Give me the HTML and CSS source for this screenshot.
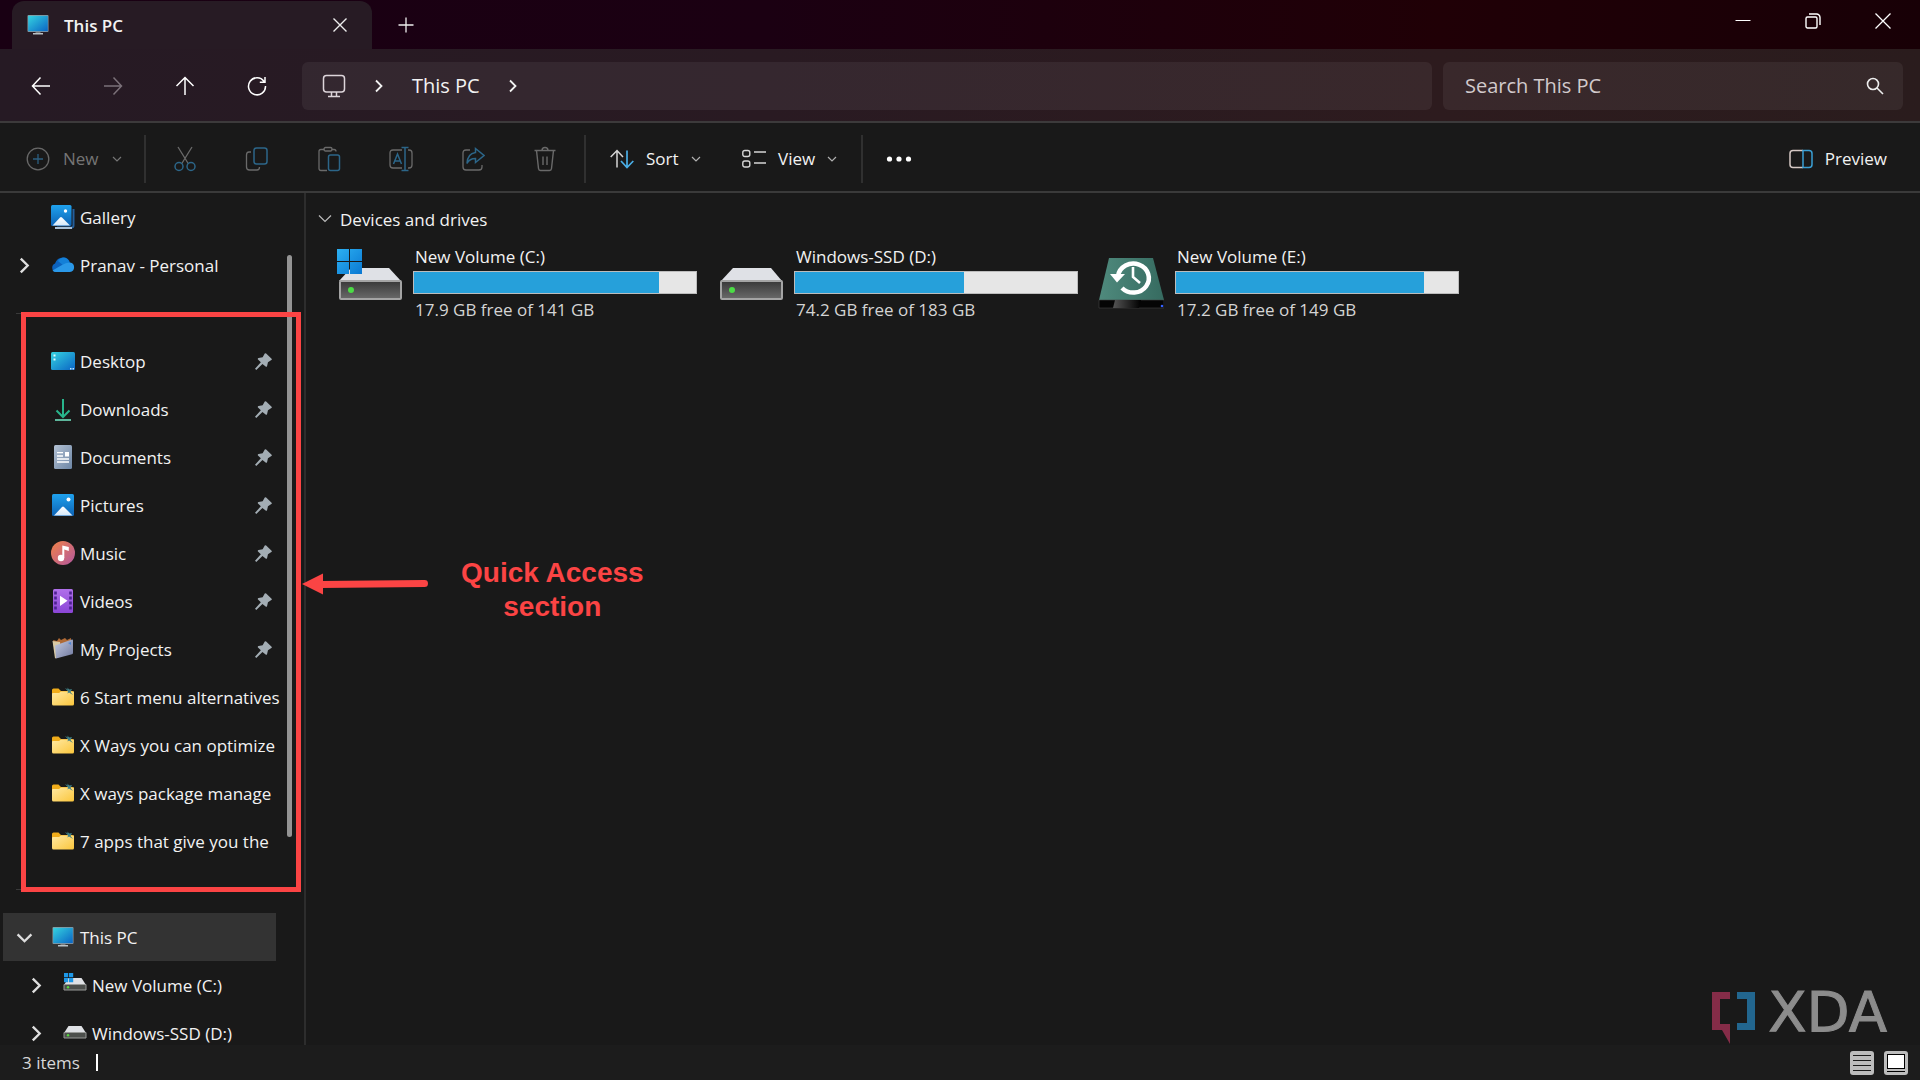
FILE: index.html
```html
<!DOCTYPE html>
<html lang="en">
<head>
<meta charset="utf-8">
<meta name="viewport" content="width=device-width, initial-scale=1">
<title>This PC</title>
<link rel="stylesheet" href="styles.css">
</head>
<body>
<svg class="sprite" aria-hidden="true">
  <defs>
    <linearGradient id="g-screen" x1="0" y1="0" x2="1" y2="1"><stop offset="0" stop-color="#35d3e0"/><stop offset="1" stop-color="#0a64c4"/></linearGradient>
    <linearGradient id="g-blue" x1="0" y1="0" x2="0" y2="1"><stop offset="0" stop-color="#1fa2ee"/><stop offset="1" stop-color="#0d62b4"/></linearGradient>
    <linearGradient id="g-white" x1="0" y1="0" x2="0" y2="1"><stop offset="0" stop-color="#ffffff"/><stop offset="1" stop-color="#d4e8fa"/></linearGradient>
    <linearGradient id="g-doc" x1="0" y1="0" x2="1" y2="1"><stop offset="0" stop-color="#b4c2d4"/><stop offset="1" stop-color="#6d86a5"/></linearGradient>
    <linearGradient id="g-music" x1="0" y1="0" x2="1" y2="1"><stop offset="0" stop-color="#f08247"/><stop offset="1" stop-color="#b3579f"/></linearGradient>
    <linearGradient id="g-video" x1="0" y1="0" x2="0" y2="1"><stop offset="0" stop-color="#b070ea"/><stop offset="1" stop-color="#8a45d6"/></linearGradient>
    <linearGradient id="g-folder" x1="0" y1="0" x2="1" y2="1"><stop offset="0" stop-color="#ffe9a2"/><stop offset="1" stop-color="#fbc63c"/></linearGradient>
    <linearGradient id="g-proj" x1="0" y1="0" x2="1" y2="1"><stop offset="0" stop-color="#c4cbe0"/><stop offset="1" stop-color="#7079a0"/></linearGradient>
    <linearGradient id="g-front" x1="0" y1="0" x2="0" y2="1"><stop offset="0" stop-color="#383838"/><stop offset="1" stop-color="#6a6a6a"/></linearGradient>
    <linearGradient id="g-black" x1="0" y1="0" x2="1" y2="0"><stop offset="0" stop-color="#555"/><stop offset="1" stop-color="#000"/></linearGradient>
    <linearGradient id="g-win" x1="0" y1="0" x2="1" y2="1"><stop offset="0" stop-color="#2cb0f2"/><stop offset="1" stop-color="#0a78d2"/></linearGradient>
    <linearGradient id="g-green" x1="0" y1="0" x2="1" y2="0"><stop offset="0" stop-color="#4f8a7d"/><stop offset="1" stop-color="#366b60"/></linearGradient>
  </defs>
  <symbol id="i-pc" viewBox="0 0 24 24"><rect x="1.5" y="2" width="21" height="17" rx="1" fill="#8d989e"/><rect x="2.2" y="2.800" width="19.6" height="15.4" fill="url(#g-screen)"/><path d="M9.5 19h5v1.500h-5z" fill="#777"/><path d="M7 20h10v1.500H7z" fill="#b9c1c5"/></symbol>
  <symbol id="i-gallery" viewBox="0 0 24 24"><path d="M6 22.500h14.500a2 2 0 0 0 2-2V4" fill="none" stroke="#235f9c" stroke-width="2"/><path d="M4 23h17" stroke="#a9c0d6" stroke-width="2"/><rect width="20.500" height="21" rx="1.500" fill="url(#g-blue)"/><path d="M1.500 20.500 9 12.500q1-1 2 0l8 8z" fill="url(#g-white)"/><circle cx="14.500" cy="6" r="1.700" fill="#fff"/></symbol>
  <symbol id="i-cloud" viewBox="0 0 24 24"><path d="M4.500 19A4.500 4.500 0 0 1 4 10.500Q6 4.500 12 4.500T19 10l0 2z" fill="#0c62bd"/><path d="M7 8Q9 4.500 13 4.500 17 5 18.500 9.300L13 13z" fill="#1480d8"/><path d="M1.500 17.500 11 12q4-2.700 8-2.500a4.800 4.800 0 0 1 0 9.500H5q-2.200 0-3.500-1.500z" fill="#2a98e8"/></symbol>
  <symbol id="i-desktop" viewBox="0 0 24 24"><rect y="3" width="24" height="18" rx="1.500" fill="url(#g-screen)"/><path d="M2.500 5.500h2v2h-2zM2.500 9.500h2v2h-2z" fill="#dffcff"/><path d="M19 19h1.500v1.500H19zM21.500 19H23v1.500h-1.500z" fill="#bfe3ff"/></symbol>
  <symbol id="i-download" viewBox="0 0 24 24"><path d="M12 2v18M5.500 13.500 12 20l6.500-6.500" fill="none" stroke="#28b58c" stroke-width="2"/><path d="M4 23h16" stroke="#5db59b" stroke-width="2"/></symbol>
  <symbol id="i-doc" viewBox="0 0 24 24"><rect x="3" width="18" height="24" rx="1.500" fill="url(#g-doc)"/><path d="M6 7.700h6M6 11h6M6 14h12M6 17h12" stroke="#fff" stroke-width="1.300"/><path d="M14 7h4v4.500h-4z" fill="#fff"/></symbol>
  <symbol id="i-pic" viewBox="0 0 24 24"><rect x="1" y="1" width="22" height="22" rx="1.500" fill="url(#g-blue)"/><path d="M3 22.500 11 14q1-1 2 0l8.500 8.500z" fill="url(#g-white)"/><circle cx="17.500" cy="6.500" r="2" fill="#fff"/></symbol>
  <symbol id="i-music" viewBox="0 0 24 24"><circle cx="12" cy="12" r="12" fill="url(#g-music)"/><circle cx="10" cy="17" r="3.200" fill="#fff"/><path d="M11.300 17V4.500l6.500 1.500v4l-4.500-1.500V17z" fill="#fff"/></symbol>
  <symbol id="i-video" viewBox="0 0 24 24"><rect x="2" width="20" height="24" rx="1.500" fill="url(#g-video)"/><path d="M3.200 2.500h2.600v3H3.200zm0 5h2.600v3H3.200zm0 5h2.600v3H3.200zm0 5h2.600v3H3.200zM18.200 2.500h2.600v3h-2.600zm0 5h2.600v3h-2.600zm0 5h2.600v3h-2.600zm0 5h2.600v3h-2.600z" fill="#4d2191"/><path d="m9 6.800 7.500 5L9 17z" fill="#fff"/></symbol>
  <symbol id="i-projects" viewBox="0 0 24 24"><path d="M2 3l4 1 2-3 2 2 4-2 2 2 4-2v4L4 9z" fill="#b06a35"/><path d="M1.500 4 9 5l1 14-6 2.500z" fill="#d8c9a4"/><path d="M4 8.500 21 2.500q1-.2 1 1V16q0 1-1 1.300L5 21.500z" fill="url(#g-proj)"/><path d="m17 6 3-1v3z" fill="#4d86d8"/></symbol>
  <symbol id="i-folder" viewBox="0 0 24 24"><path d="M1 5q0-1.500 1.500-1.500h5L10 6h11q2 0 2 2v3H1z" fill="#f0ac1a"/><path d="M1 9q0-1 1-1h6l2-1.500h13V19q0 1.500-1.500 1.500h-19Q1 20.500 1 19z" fill="url(#g-folder)"/><path d="m14 3 3 1.500L16 2.500l2.500 2L21 4l-1.500 3 2.500 3-4-2.500-1.500 1 .5-2z" fill="#3f7f86"/></symbol>
  <symbol id="i-disk" viewBox="0 0 24 24"><path d="M5.500 5h13L23 12H1z" fill="#dfe1e5"/><path d="M1 11.500h22V17H1z" fill="#4c4f4c" stroke="#989a98"/><circle cx="5" cy="14.200" r="1.200" fill="#55d840"/></symbol>
  <symbol id="i-diskwin" viewBox="0 0 24 24"><path d="M5.500 5h13L23 12H1z" fill="#dfe1e5"/><path d="M1 11.500h22V17H1z" fill="#4c4f4c" stroke="#989a98"/><circle cx="5" cy="14.200" r="1.200" fill="#55d840"/><path d="M1 0h4.200v4.200H1zM6 0h4.200v4.200H6zM1 5h4.200v4.200H1zM6 5h4.200v4.200H6z" fill="#1d98e8"/></symbol>
  <symbol id="i-pin" viewBox="0 0 16 16"><path d="M9.200.5q.7-.6 1.300 0l5.100 5q.6.700-.2 1.200L12.200 8.800l-.8 3.400q-.4 1.300-1.400.6L7 10.300 1.200 16 0 14.800l5.500-6L2.800 6.200q-.6-1 .6-1.400L7.200 4z" fill="#a3adb4"/></symbol>
  <symbol id="i-right" viewBox="0 0 16 16"><path d="m4.500 1.500 6.500 6.500-6.500 6.500" fill="none" stroke="currentColor" stroke-width="2.200"/></symbol>
  <symbol id="i-down" viewBox="0 0 16 16"><path d="M1.500 5 8 11.500 14.500 5" fill="none" stroke="currentColor" stroke-width="2.200"/></symbol>
  <symbol id="i-caret" viewBox="0 0 10 10"><path d="m1 3 4 4 4-4" fill="none" stroke="currentColor" stroke-width="1.200"/></symbol>
  <symbol id="i-crumb" viewBox="0 0 12 14"><path d="m3 1.500 5.500 5.500L3 12.500" fill="none" stroke="currentColor" stroke-width="1.800"/></symbol>
</svg>

<div class="window">
  <header class="titlebar">
    <div class="tab">
      <svg class="icon24"><use href="#i-pc"/></svg>
      <span class="tab-title">This PC</span>
      <button class="tab-close" aria-label="Close tab"><svg width="14" height="16" viewBox="0 0 14 16"><path d="m.5 1.500 13 13M13.500 1.500l-13 13" stroke="#eee" stroke-width="1.400"/></svg></button>
    </div>
    <button class="tab-new" aria-label="New tab"><svg width="16" height="16" viewBox="0 0 16 16"><path d="M8 .5v15M.5 8h15" stroke="#eee" stroke-width="1.300"/></svg></button>
    <div class="win-controls">
      <button aria-label="Minimize"><svg width="16" height="16" viewBox="0 0 16 16"><path d="M.5 7.500h15" stroke="#fff"/></svg></button>
      <button aria-label="Restore"><svg width="16" height="16" viewBox="0 0 16 16" fill="none" stroke="#fff" stroke-width="1.400"><rect x="1" y="4" width="11" height="11" rx="1.500"/><path d="M4 1h7.500A3.500 3.500 0 0 1 15 4.500V12"/></svg></button>
      <button aria-label="Close"><svg width="16" height="16" viewBox="0 0 16 16"><path d="m.5.5 15 15M15.500.5l-15 15" stroke="#fff" stroke-width="1.300"/></svg></button>
    </div>
  </header>

  <div class="navbar">
    <div class="nav-buttons">
      <button aria-label="Back"><svg width="20" height="20" viewBox="0 0 20 20"><path d="M19 10H1.500M9.500 1.500 1.500 10l8 8.500" /></svg></button>
      <button aria-label="Forward" disabled><svg width="20" height="20" viewBox="0 0 20 20"><path d="M1 10h17.500M10.500 1.500l8 8.500-8 8.500"/></svg></button>
      <button aria-label="Up"><svg width="20" height="20" viewBox="0 0 20 20"><path d="M10 19V1.500M1.500 10 10 1.500l8.500 8.500"/></svg></button>
      <button aria-label="Refresh"><svg width="20" height="20" viewBox="0 0 20 20"><path d="M17 5.500A8.500 8.500 0 1 0 18.500 10M18 1v5.200h-5.200"/></svg></button>
    </div>
    <div class="address">
      <svg width="24" height="24" viewBox="0 0 24 24" fill="none" stroke="#ddd5da" stroke-width="1.500"><rect x="1.500" y="1.500" width="21" height="16.500" rx="3"/><path d="M9.500 18v4M14.500 18v4M6 22.500h12"/></svg>
      <svg width="12" height="14"><use href="#i-crumb"/></svg>
      <a href="#">This PC</a>
      <svg width="12" height="14"><use href="#i-crumb"/></svg>
    </div>
    <div class="search">
      <input type="search" aria-label="Search This PC" placeholder="Search This PC">
      <svg width="18" height="18" viewBox="0 0 18 18" fill="none" stroke="#eee" stroke-width="1.600"><circle cx="7" cy="7" r="5.500"/><path d="m11 11 6 6"/></svg>
    </div>
  </div>

  <div class="toolbar">
    <button class="new" disabled>
      <svg width="24" height="24" viewBox="0 0 24 24" fill="none" stroke="#686868" stroke-width="1.300"><circle cx="12" cy="12" r="10.800"/><path d="M12 7v10M7 12h10" stroke="#2c5f80"/></svg>
      <span>New</span><svg class="caret"><use href="#i-caret"/></svg>
    </button>
    <span class="sep"></span>
    <button class="tool" aria-label="Cut" disabled><svg width="24" height="26" viewBox="0 0 24 26" fill="none" stroke="#6a6a6a" stroke-width="1.300"><path d="M5 1l10.500 17M19 1 8.500 18"/><g stroke="#2c6689" stroke-width="1.500"><circle cx="6" cy="20.500" r="4"/><circle cx="18" cy="20.500" r="4"/></g></svg></button>
    <button class="tool" aria-label="Copy" disabled><svg width="24" height="26" viewBox="0 0 24 26" fill="none" stroke="#6a6a6a" stroke-width="1.300"><path d="M6 6H4Q1.500 6 1.500 9v12q0 3 3 3H12q2.500 0 2.500-3"/><rect x="9" y="2" width="13" height="16" rx="2.500" stroke="#2c6689" stroke-width="1.500"/></svg></button>
    <button class="tool" aria-label="Paste" disabled><svg width="24" height="26" viewBox="0 0 24 26" fill="none" stroke="#6a6a6a" stroke-width="1.300"><path d="M10 24.500H4q-2 0-2-2v-17q0-2 2-2h3.500M14.500 3.500H17q2 0 2 2"/><rect x="7" y="1.500" width="8" height="3.500" rx="1.500"/><rect x="11.500" y="9" width="11" height="15.500" rx="2" stroke="#2c6689" stroke-width="1.500"/></svg></button>
    <button class="tool" aria-label="Rename" disabled><svg width="26" height="26" viewBox="0 0 26 26" fill="none" stroke="#6a6a6a" stroke-width="1.300"><path d="M14 4H5Q2 4 2 7v12q0 3 3 3h9M20 4h1q3 0 3 3v12q0 3-3 3h-1"/><path d="M17 1.500v23M13.500 1.500h7M13.500 24.500h7M5.500 18l4-10 4 10M7 15h5" stroke="#2c6689" stroke-width="1.500"/></svg></button>
    <button class="tool" aria-label="Share" disabled><svg width="24" height="26" viewBox="0 0 24 26" fill="none" stroke="#6a6a6a" stroke-width="1.300"><path d="M9 4H5Q2 4 2 7v14q0 3 3 3h13q3 0 3-3v-2"/><path d="M14.500 2.500 23 9.500l-8.500 7v-4q-6 0-8.500 5 .5-10 8.500-11z" stroke="#2c6689" stroke-width="1.500"/></svg></button>
    <button class="tool" aria-label="Delete" disabled><svg width="24" height="26" viewBox="0 0 24 26" fill="none" stroke="#6a6a6a" stroke-width="1.400"><path d="M1.500 4.500h21M9 4.500q0-3 3-3t3 3M3.500 4.500l2 18q.2 2 2 2h9q1.800 0 2-2l2-18M10 10.500v8.500M14 10.500v8.500"/></svg></button>
    <span class="sep"></span>
    <button class="menu"><svg width="24" height="20" viewBox="0 0 24 20" fill="none" stroke="#d5d5d5" stroke-width="1.500"><path d="M7 18.500V1.500M.7 8 7 1.500 13 8"/><path d="M17 1.500v17M11 12l6 6.500 6.300-6.500" stroke="#4aaee6" stroke-width="1.700"/></svg><span>Sort</span><svg class="caret"><use href="#i-caret"/></svg></button>
    <button class="menu view"><svg width="24" height="20" viewBox="0 0 24 20" fill="none" stroke="#d5d5d5" stroke-width="1.400"><rect x=".8" y="1.500" width="7" height="6" rx="2"/><rect x=".8" y="12" width="7" height="6" rx="2"/><path d="M12 3h12M12 14h12"/></svg><span>View</span><svg class="caret"><use href="#i-caret"/></svg></button>
    <span class="sep"></span>
    <button class="more" aria-label="See more"><svg width="26" height="6" viewBox="0 0 26 6" fill="#fff"><circle cx="3.500" cy="3" r="2.600"/><circle cx="13" cy="3" r="2.600"/><circle cx="22.500" cy="3" r="2.600"/></svg></button>
    <button class="preview"><svg width="24" height="20" viewBox="0 0 24 20" fill="none" stroke-width="1.500"><path d="M14 1.500H4Q1 1.500 1 4.500v11q0 3 3 3h10" stroke="#d5c8c4"/><path d="M14 1.500h6q3 0 3 3v11q0 3-3 3h-6z" stroke="#3a9fd4"/></svg><span>Preview</span></button>
  </div>

  <div class="body">
    <nav class="sidebar" aria-label="Folders">
      <a class="row" href="#"><span class="chev"></span><svg class="icon24"><use href="#i-gallery"/></svg><span class="label">Gallery</span></a>
      <a class="row" href="#"><span class="chev"><svg class="icon16"><use href="#i-right"/></svg></span><svg class="icon24"><use href="#i-cloud"/></svg><span class="label">Pranav - Personal</span></a>
      <hr>
      <section class="quick">
        <a class="row" href="#"><span class="chev"></span><svg class="icon24"><use href="#i-desktop"/></svg><span class="label">Desktop</span><svg class="icon16"><use href="#i-pin"/></svg></a>
        <a class="row" href="#"><span class="chev"></span><svg class="icon24"><use href="#i-download"/></svg><span class="label">Downloads</span><svg class="icon16"><use href="#i-pin"/></svg></a>
        <a class="row" href="#"><span class="chev"></span><svg class="icon24"><use href="#i-doc"/></svg><span class="label">Documents</span><svg class="icon16"><use href="#i-pin"/></svg></a>
        <a class="row" href="#"><span class="chev"></span><svg class="icon24"><use href="#i-pic"/></svg><span class="label">Pictures</span><svg class="icon16"><use href="#i-pin"/></svg></a>
        <a class="row" href="#"><span class="chev"></span><svg class="icon24"><use href="#i-music"/></svg><span class="label">Music</span><svg class="icon16"><use href="#i-pin"/></svg></a>
        <a class="row" href="#"><span class="chev"></span><svg class="icon24"><use href="#i-video"/></svg><span class="label">Videos</span><svg class="icon16"><use href="#i-pin"/></svg></a>
        <a class="row" href="#"><span class="chev"></span><svg class="icon24"><use href="#i-projects"/></svg><span class="label">My Projects</span><svg class="icon16"><use href="#i-pin"/></svg></a>
        <a class="row folder" href="#"><span class="chev"></span><svg class="icon24"><use href="#i-folder"/></svg><span class="label">6 Start menu alternatives</span></a>
        <a class="row folder" href="#"><span class="chev"></span><svg class="icon24"><use href="#i-folder"/></svg><span class="label">X Ways you can optimize</span></a>
        <a class="row folder" href="#"><span class="chev"></span><svg class="icon24"><use href="#i-folder"/></svg><span class="label">X ways package manage</span></a>
        <a class="row folder" href="#"><span class="chev"></span><svg class="icon24"><use href="#i-folder"/></svg><span class="label">7 apps that give you the</span></a>
      </section>
      <hr>
      <a class="row selected" href="#"><span class="chev"><svg class="icon16"><use href="#i-down"/></svg></span><svg class="icon24"><use href="#i-pc"/></svg><span class="label">This PC</span></a>
      <a class="row child" href="#"><span class="chev"><svg class="icon16"><use href="#i-right"/></svg></span><svg class="icon24"><use href="#i-diskwin"/></svg><span class="label">New Volume (C:)</span></a>
      <a class="row child" href="#"><span class="chev"><svg class="icon16"><use href="#i-right"/></svg></span><svg class="icon24"><use href="#i-disk"/></svg><span class="label">Windows-SSD (D:)</span></a>
      <div class="thumb"></div>
    </nav>

    <main class="content">
      <h1><svg width="14" height="14" viewBox="0 0 14 14"><path d="m1 2.500 6 6 6-6" fill="none" stroke="#bbb" stroke-width="1.200"/></svg>Devices and drives</h1>
      <div class="drives">
        <article class="drive">
          <svg width="70" height="64" viewBox="0 1 70 64"><path d="M19 25h38l12 13H7z" fill="#dfe1e6"/><rect x="8" y="38" width="61" height="18" rx="1" fill="url(#g-front)" stroke="#a4a4a4" stroke-width="2"/><circle cx="19" cy="47" r="3" fill="#4bdc45"/><path d="M5 6h12v12H5zM18 6h12v12H18zM5 19h12v12H5zM18 19h12v12H18z" fill="url(#g-win)"/></svg>
          <div class="info"><span class="name">New Volume (C:)</span><div class="bar"><div class="fill" style="width:87%"></div></div><span class="free">17.9 GB free of 141 GB</span></div>
        </article>
        <article class="drive">
          <svg width="70" height="64" viewBox="0 1 70 64"><path d="M20 25h38l11 13H8z" fill="#dfe1e6"/><rect x="8" y="38" width="61" height="18" rx="1" fill="url(#g-front)" stroke="#a4a4a4" stroke-width="2"/><circle cx="19" cy="47" r="3" fill="#4bdc45"/></svg>
          <div class="info"><span class="name">Windows-SSD (D:)</span><div class="bar"><div class="fill" style="width:60%"></div></div><span class="free">74.2 GB free of 183 GB</span></div>
        </article>
        <article class="drive">
          <svg width="70" height="68" viewBox="0 1 70 68"><path d="M15 15h44l11 42H5z" fill="url(#g-green)"/><path d="M5 57h65v8H5z" fill="#050505" stroke="#444" stroke-width=".6"/><path d="M21 57h26l-2 8H19z" fill="url(#g-black)"/><circle cx="68" cy="63" r="1.300" fill="#3560ff"/><path d="M24 33A15.500 14.500 0 1 1 28 45" fill="none" stroke="#fff" stroke-width="4.500"/><path d="m16 31 15 0-8 8.500z" fill="#fff"/><path d="M39 24v10l7 6" fill="none" stroke="#fff" stroke-width="2.600"/></svg>
          <div class="info"><span class="name">New Volume (E:)</span><div class="bar"><div class="fill" style="width:88%"></div></div><span class="free">17.2 GB free of 149 GB</span></div>
        </article>
      </div>

      <div class="note">
        <svg width="128" height="22" viewBox="0 0 128 22"><path d="M18 11.500 122.500 10.500" stroke="#fb4444" stroke-width="7" stroke-linecap="round"/><path d="M0 11 21 .5v21z" fill="#fb4444"/></svg>
        <p>Quick Access<br>section</p>
      </div>
      <div class="brand">
        <svg width="44" height="52" viewBox="0 0 44 52"><path d="M18 0v7H8v25h10v20L10 38H0V0z" fill="#852c48"/><path d="M25 0h18v38H25v-7h10V7H25z" fill="#22668f"/></svg>
        <span>XDA</span>
      </div>
    </main>
  </div>

  <footer class="status">
    <span>3 items</span><span class="tick"></span>
    <div class="modes">
      <button aria-label="Details view"><svg width="24" height="24" viewBox="0 0 24 24"><rect width="24" height="24" rx="3" fill="#bcbcbc"/><path d="M3 4.500h18M3 9.500h18M3 14.500h18M3 19.500h18" stroke="#1a1a1a"/></svg></button>
      <button aria-label="Large icons view"><svg width="24" height="24" viewBox="0 0 24 24"><rect width="24" height="24" rx="3" fill="#bcbcbc"/><rect x="3.500" y="3.500" width="17" height="14" fill="#fff" stroke="#000"/><path d="M3 20.500h18" stroke="#000"/></svg></button>
    </div>
  </footer>
</div>
</body>
</html>
```
FILE: styles.css
```css
* { box-sizing: border-box; }

body {
  margin: 0;
  background: #191919;
  color: #f2f2f2;
  font: 17px/24px "Open Sans", "Noto Sans", sans-serif;
}

button {
  display: flex;
  align-items: center;
  justify-content: center;
  padding: 0;
  border: 0;
  background: none;
  color: inherit;
  font: inherit;
}

a { color: inherit; text-decoration: none; }
svg { flex: none; display: block; }

.sprite { position: absolute; width: 0; height: 0; }
.icon24 { width: 24px; height: 24px; }
.icon16 { width: 17px; height: 17px; }

.window {
  display: flex;
  flex-direction: column;
  height: 100vh;
  overflow: hidden;
}

/* Title bar */
.titlebar {
  flex: none;
  display: flex;
  height: 49px;
  padding: 1px 2px 0 12px;
  background: linear-gradient(90deg, #190013, #1b0012 40%, #200006 75%, #180006);
}

.tab {
  display: flex;
  align-items: center;
  width: 360px;
  padding: 0 15px 0 14px;
  border-radius: 12px 12px 0 0;
  background: #271b24;
}

.tab-title {
  flex: 1;
  padding: 2px 0 0 14px;
  font-weight: 600;
}

.tab-close { width: 34px; height: 34px; }
.tab-new { width: 68px; }
.win-controls { display: flex; margin-left: auto; }
.win-controls button { width: 70px; height: 40px; }

/* Navigation bar */
.navbar {
  flex: none;
  display: flex;
  align-items: center;
  height: 74px;
  padding: 2px 17px 0 5px;
  border-bottom: 2px solid #3c3a3b;
  background: linear-gradient(90deg, #261a24, #291a22 40%, #2d1b1e 75%, #2a1c1d);
}

.nav-buttons { display: flex; margin-right: 9px; }
.nav-buttons button { width: 72px; height: 48px; }
.nav-buttons svg { fill: none; stroke: #fff; stroke-width: 1.5; }
.nav-buttons button:disabled svg { stroke: #7b7179; }

.address,
.search {
  display: flex;
  align-items: center;
  height: 48px;
  border-radius: 6px;
  background: rgba(255, 255, 255, 0.06);
  font-size: 20px;
}

.address { flex: 1; gap: 27px; padding-left: 20px; }
.search { width: 460px; margin-left: 11px; padding: 0 19px 0 22px; }

.search input {
  flex: 1;
  min-width: 0;
  padding: 0;
  border: 0;
  outline: 0;
  background: none;
  color: #d2cacc;
  font: inherit;
}

.search input::placeholder { color: #d2cacc; opacity: 1; }

/* Command bar */
.toolbar {
  flex: none;
  display: flex;
  align-items: center;
  height: 70px;
  padding: 4px 33px 0 26px;
  border-bottom: 2px solid #3a3a3a;
}

.toolbar button { height: 48px; }
.sep { width: 2px; height: 48px; background: #303030; }
.toolbar .caret { width: 10px; height: 10px; color: #b0b0b0; }
.toolbar .new { justify-content: flex-start; gap: 13px; width: 118px; color: #757575; }
.toolbar .new .caret { color: #757575; }
.tool,
.more { width: 72px; }
.sep + .tool { margin-left: 3px; }
.tool + .sep { margin-left: 3px; }
.toolbar .menu { justify-content: flex-start; gap: 12px; width: 132px; margin-left: 24px; }
.toolbar .menu.view { width: 119px; margin-left: 0; }
.toolbar .preview { gap: 12px; margin-left: auto; }

/* Body */
.body {
  flex: 1;
  display: flex;
  min-height: 0;
}

.sidebar {
  position: relative;
  flex: none;
  width: 306px;
  padding-right: 28px;
  overflow: hidden;
  border-right: 2px solid #2d2d2d;
}

.row {
  display: flex;
  align-items: center;
  gap: 5px;
  height: 48px;
  margin-left: 3px;
  padding-right: 4px;
}

.row.folder { padding-right: 0; }
.row.child { padding-left: 12px; }
.row.selected { background: #333; }

.chev {
  flex: none;
  display: flex;
  justify-content: center;
  width: 43px;
  color: #dedede;
}

.label {
  flex: 1;
  min-width: 0;
  padding-top: 2px;
  white-space: nowrap;
}

.sidebar hr {
  height: 48px;
  margin: 0 0 0 16px;
  border: 0;
  background: linear-gradient(#3a3a3a, #3a3a3a) 0 50% / 100% 1px no-repeat;
}

.quick { position: relative; }

.quick::after {
  content: "";
  position: absolute;
  z-index: 1;
  inset: -25px -25px -27px 21px;
  border: 5px solid #fb4444;
  pointer-events: none;
}

.thumb {
  position: absolute;
  top: 62px;
  right: 12px;
  width: 5px;
  height: 582px;
  border-radius: 3px;
  background: #949494;
}

.content {
  position: relative;
  flex: 1;
  min-width: 0;
  padding: 15px 0 0 12px;
}

.content h1 {
  display: flex;
  align-items: center;
  gap: 8px;
  margin: 0;
  font-size: 17px;
  font-weight: 400;
}

.drives {
  display: flex;
  flex-wrap: wrap;
  margin-left: 14px;
  padding-top: 12px;
}

.drive {
  display: flex;
  align-items: flex-start;
  gap: 11px;
  width: 381px;
}

.info { width: 284px; }
.name, .free { display: block; padding-left: 2px; }
.name { height: 27px; padding-top: 1px; }
.free { padding-top: 4px; color: #d4d4d4; }

.bar {
  height: 23px;
  border: 1px solid #bcbcbc;
  background: #e6e6e6;
}

.fill { height: 100%; background: #26a0da; }

/* Callout over the file area */
.note {
  position: absolute;
  top: 363px;
  left: -4px;
  display: flex;
  align-items: flex-start;
  gap: 31px;
  color: #fb4444;
  font: bold 28px/34px "Liberation Sans", Arial, sans-serif;
  text-align: center;
}

.note svg { margin-top: 17px; }
.note p { margin: 0; }

.brand {
  position: absolute;
  right: 33px;
  bottom: 1px;
  display: flex;
  gap: 12px;
  color: #8c8c8c;
  font: 56px/40px "DejaVu Sans", sans-serif;
  -webkit-text-stroke: 1px #8c8c8c;
}

/* Status bar */
.status {
  flex: none;
  display: flex;
  align-items: center;
  height: 35px;
  padding: 0 12px 0 22px;
  background: #1c1c1c;
  color: #d8d8d8;
}

.tick { width: 2px; height: 17px; margin-left: 16px; background: #fff; }
.modes { display: flex; gap: 10px; margin-left: auto; }
```
